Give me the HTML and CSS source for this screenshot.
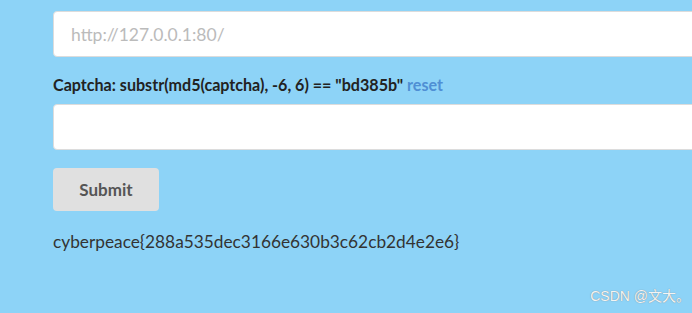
FILE: index.html
```html
<!DOCTYPE html>
<html lang="en">
<head>
    <meta charset="UTF-8">
    <title>Check</title>
    <link rel="stylesheet" href="styles.css">
</head>
<body>
    <main class="page">
        <form class="check-form">
            <input class="field" type="text" placeholder="http://127.0.0.1:80/">
            <label class="captcha-label">Captcha: substr(md5(captcha), -6, 6) == "bd385b" <a href="#">reset</a></label>
            <input class="field" type="text">
            <button class="submit-button" type="button">Submit</button>
        </form>
        <p class="flag">cyberpeace{288a535dec3166e630b3c62cb2d4e2e6}</p>
    </main>
    <div class="watermark">CSDN @文大。</div>
</body>
</html>
```

FILE: styles.css
```css
body {
    margin: 0;
    padding: 0;
    background-color: #8dd3f7;
    font-family: Lato, "Noto Sans", sans-serif;
    color: #333;
    height: 313px;
    overflow: hidden;
    position: relative;
}

.page {
    padding: 11px 0 0 53px;
    overflow: hidden;
}

.check-form {
    display: flex;
    flex-direction: column;
    align-items: flex-start;
}

.field {
    box-sizing: border-box;
    width: calc(100% + 20px);
    height: 46px;
    border: 1px solid #dcdcdc;
    border-radius: 4px;
    background: #fff;
    padding: 0 17px;
    font-family: inherit;
    font-size: 17.5px;
    color: #333;
}

.field::placeholder {
    color: #bbb;
}

.captcha-label {
    font-weight: bold;
    font-size: 16.1px;
    color: #222;
    margin: 19px 0 10px;
    line-height: 18px;
}

.captcha-label a {
    color: #4f8fd4;
    text-decoration: none;
}

.submit-button {
    margin-top: 18px;
    width: 106px;
    height: 43px;
    border: none;
    border-radius: 4px;
    background-color: #e0e0e0;
    color: #555;
    font-family: inherit;
    font-weight: bold;
    font-size: 17px;
}

.flag {
    margin: 21px 0 0;
    font-size: 17.3px;
    line-height: 20px;
}

.watermark {
    position: absolute;
    right: 2px;
    bottom: 8px;
    font-family: "Liberation Sans", "Noto Sans CJK SC", sans-serif;
    font-size: 14px;
    color: #f4f4f4;
    text-shadow: 0 0 1px #777;
}
```
